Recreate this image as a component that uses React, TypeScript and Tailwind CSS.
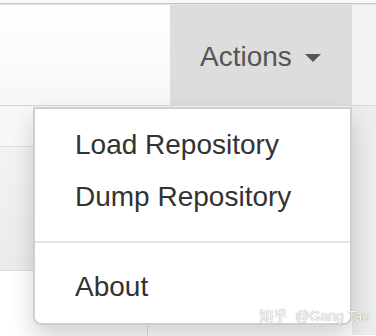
import React from "react";

const font = { fontFamily: '"Liberation Sans", Arial, sans-serif' };

function DropdownMenu() {
  return (
    <div className="absolute left-[33px] top-[107px] w-[319px] bg-white border-2 border-[#cfcfcf] rounded-b-[8px] py-[10px] shadow-[0_12px_24px_rgba(0,0,0,0.18)]">
      <div className="px-[40px] py-[6px] text-[28px] leading-[40px] text-[#333333]">Load Repository</div>
      <div className="px-[40px] py-[6px] text-[28px] leading-[40px] text-[#333333]">Dump Repository</div>
      <div className="h-[2px] bg-[#e5e5e5] mt-[18px] mb-[18px]" />
      <div className="px-[40px] py-[6px] text-[28px] leading-[40px] text-[#333333]">About</div>
    </div>
  );
}

export default function App() {
  return (
    <div className="relative w-[376px] h-[336px] overflow-hidden bg-white" style={font}>
      {/* window top edge */}
      <div className="h-[3px] bg-[#f8f8f8]" />
      <div className="h-px bg-[#c6c6c6]" />
      <div className="h-px bg-[#e4e4e4]" />

      {/* navbar */}
      <div className="flex h-[101px] border-b border-[#d6d6d6]">
        <div className="flex-1 bg-gradient-to-b from-white to-[#f7f7f7]" />
        <div className="flex items-center w-[182px] pl-[30px] pt-[4px] bg-[#dddddd] text-[28px] leading-[40px] text-[#555555]">
          Actions
          <span className="inline-block ml-[13px] mt-[2px] w-0 h-0 border-t-[8px] border-x-[8px] border-x-transparent border-t-[#555555]" />
        </div>
        <div className="w-[24px] bg-[#f3f3f3]" />
      </div>

      {/* page content behind the menu */}
      <div className="flex h-[229px]">
        <div className="flex-1 flex flex-col">
          <div className="h-[41px] bg-[#f8f8f8] border-b border-[#dcdcdc]" />
          <div className="h-[124px] bg-gradient-to-b from-[#f3f3f3] to-[#ebebeb] border-b border-[#dedede]" />
          <div className="flex-1 grid grid-cols-[148px_1fr]">
            <div className="border-r border-[#dcdcdc]" />
            <div />
          </div>
        </div>
        <div className="w-[24px] bg-[#ededed]" />
      </div>

      <DropdownMenu />

      <div
        className="absolute right-[6px] top-[306px] flex gap-[8px] whitespace-nowrap text-[14px] leading-[20px] text-[#f7f7f7] [text-shadow:0_0_1px_rgba(0,0,0,0.5)]"
        style={{ fontFamily: '"Liberation Sans", "Noto Sans CJK SC", sans-serif' }}
      >
        <span>知乎</span>
        <span>@Gang Tao</span>
      </div>
    </div>
  );
}
